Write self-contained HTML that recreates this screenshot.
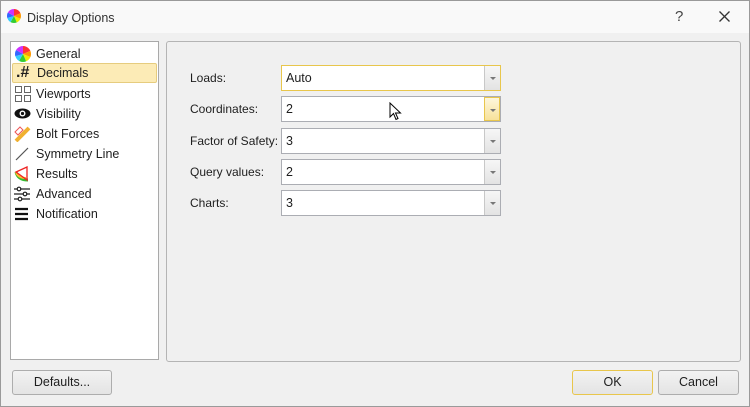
<!DOCTYPE html>
<html><head><meta charset="utf-8"><style>
*{box-sizing:border-box;margin:0;padding:0}
body{width:750px;height:407px;overflow:hidden;font-family:"Liberation Sans",sans-serif;font-size:12px;color:#1e1e1e;background:#f0f0f0}
.win{position:absolute;left:0;top:0;width:750px;height:407px;background:#f0f0f0}
.frame{position:absolute;left:0;top:0;width:750px;height:407px;border:1px solid #9a9a9a;pointer-events:none}
.title{position:absolute;left:0;top:0;width:750px;height:33px;background:#f9f9f9}
.title .t{position:absolute;left:27px;top:11px;font-size:12.5px;color:#333}
.abs{position:absolute}
.list{position:absolute;left:10px;top:41px;width:149px;height:319px;background:#fff;border:1px solid #a9a9a9}
.item{position:absolute;left:0;width:147px;height:20px}
.item span{position:absolute;left:25px;top:3px;font-size:12.5px}
.sel{background:#fcebb6;border:1px solid #e6cc7e;border-radius:2px;left:1px;width:145px}
.panel{position:absolute;left:166px;top:41px;width:575px;height:321px;border:1px solid #b4b4b4;border-radius:3px;background:#f0f0f0}
.lbl{position:absolute;left:190px;font-size:12px}
.cb{position:absolute;left:281px;width:220px;height:26px;background:#fff;border:1px solid #abadb3}
.cb span{position:absolute;left:4px;top:5px;font-size:12.5px}
.cb .dd{position:absolute;right:0;top:0;width:16px;height:24px;border-left:1px solid #c8c8c8;background:linear-gradient(#f6f6f6,#e3e3e3)}
.cb .dd:after{content:"";position:absolute;left:5px;top:11px;border-left:3px solid transparent;border-right:3px solid transparent;border-top:3px solid #777}
.btn{position:absolute;height:25px;border:1px solid #adadad;border-radius:3px;background:linear-gradient(#f2f2f2,#e4e4e4);text-align:center;line-height:23px;font-size:12.5px}
</style></head><body><div class="win">
<div class="title">
<svg class="abs" style="left:7px;top:9px" width="14" height="14" viewBox="0 0 14 14"><defs><clipPath id="c"><circle cx="7" cy="7" r="7"/></clipPath></defs><g clip-path="url(#c)"><path d="M7 7L7 0L14 0L14 4Z" fill="#f33"/><path d="M7 7L14 4L14 10Z" fill="#f90"/><path d="M7 7L14 10L10 14Z" fill="#ee0"/><path d="M7 7L10 14L3 14Z" fill="#3c3"/><path d="M7 7L3 14L0 9Z" fill="#3cf"/><path d="M7 7L0 9L0 3Z" fill="#36f"/><path d="M7 7L0 3L0 0L7 0Z" fill="#c3f"/></g></svg>
<div class="t">Display Options</div>
<div class="abs" style="left:675px;top:8px;font-size:15px;color:#444">?</div>
<svg class="abs" style="left:719px;top:11px" width="11" height="11"><path d="M0.5 0.5L10.5 10.5M10.5 0.5L0.5 10.5" stroke="#333" stroke-width="1.3"/></svg>
</div>
<div class="list">
<div class="item" style="top:2px"><svg class="abs" style="left:4px;top:2px" width="16" height="16" viewBox="0 0 14 14"><g clip-path="url(#c)"><path d="M7 7L7 0L14 0L14 4Z" fill="#f33"/><path d="M7 7L14 4L14 10Z" fill="#f90"/><path d="M7 7L14 10L10 14Z" fill="#ee0"/><path d="M7 7L10 14L3 14Z" fill="#3c3"/><path d="M7 7L3 14L0 9Z" fill="#3cf"/><path d="M7 7L0 9L0 3Z" fill="#36f"/><path d="M7 7L0 3L0 0L7 0Z" fill="#c3f"/></g></svg><span>General</span></div>
<div class="item sel" style="top:21px"><span style="left:3px;top:0;font-size:16px;font-weight:bold">.#</span><span style="left:24px;top:2px">Decimals</span></div>
<div class="item" style="top:42px"><svg class="abs" style="left:4px;top:2px" width="16" height="16"><g fill="none" stroke="#666"><rect x="0.5" y="0.5" width="6" height="6"/><rect x="9.5" y="0.5" width="6" height="6"/><rect x="0.5" y="9.5" width="6" height="6"/><rect x="9.5" y="9.5" width="6" height="6"/></g></svg><span>Viewports</span></div>
<div class="item" style="top:62px"><svg class="abs" style="left:3px;top:4px" width="17" height="11"><ellipse cx="8.5" cy="5.5" rx="8" ry="5" fill="#111"/><circle cx="8.5" cy="5.5" r="3" fill="#fff"/><circle cx="8.5" cy="5.5" r="1.6" fill="#111"/></svg><span>Visibility</span></div>
<div class="item" style="top:82px"><svg class="abs" style="left:3px;top:2px" width="17" height="16"><path d="M2 15L15 2" stroke="#f0b030" stroke-width="4"/><path d="M1 6L6 1L9 4L4 9Z" fill="none" stroke="#e55" stroke-width="1"/></svg><span>Bolt Forces</span></div>
<div class="item" style="top:102px"><svg class="abs" style="left:4px;top:3px" width="14" height="14"><path d="M1 13L13 1" stroke="#555" stroke-width="1.2"/></svg><span>Symmetry Line</span></div>
<div class="item" style="top:122px"><svg class="abs" style="left:3px;top:2px" width="17" height="16"><path d="M2 6Q4 14 14 14" stroke="#3b3" stroke-width="3" fill="none"/><path d="M2 6Q4 12 12 12" stroke="#fb3" stroke-width="2" fill="none"/><path d="M13 1L2 6L13 14Z" fill="none" stroke="#e22" stroke-width="1.3"/></svg><span>Results</span></div>
<div class="item" style="top:142px"><svg class="abs" style="left:3px;top:2px" width="16" height="16"><g stroke="#222" fill="#fff" stroke-width="1.2"><path d="M0 3H16M0 8H16M0 13H16"/><circle cx="5" cy="3" r="1.8"/><circle cx="11" cy="8" r="1.8"/><circle cx="6" cy="13" r="1.8"/></g></svg><span>Advanced</span></div>
<div class="item" style="top:162px"><svg class="abs" style="left:4px;top:3px" width="14" height="14"><path d="M0 2H13M0 7H13M0 12H13" stroke="#111" stroke-width="2.2"/></svg><span>Notification</span></div>
</div>
<div class="panel"></div>
<div class="lbl" style="top:71px">Loads:</div>
<div class="lbl" style="top:102px">Coordinates:</div>
<div class="lbl" style="top:134px">Factor of Safety:</div>
<div class="lbl" style="top:165px">Query values:</div>
<div class="lbl" style="top:196px">Charts:</div>
<div class="cb" style="top:65px;border-color:#e8c64c"><span>Auto</span><div class="dd"></div></div>
<div class="cb" style="top:96px"><span>2</span><div class="dd" style="border:1px solid #e8c64c;background:linear-gradient(#fdf6dc,#f7e29a)"></div></div>
<div class="cb" style="top:128px"><span>3</span><div class="dd"></div></div>
<div class="cb" style="top:159px"><span>2</span><div class="dd"></div></div>
<div class="cb" style="top:190px"><span>3</span><div class="dd"></div></div>
<svg class="abs" style="left:389px;top:102px" width="14" height="20"><path d="M1 1L1 15L4.5 11.5L7 17.5L9 16.5L6.5 11L11.5 11Z" fill="#fff" stroke="#000" stroke-width="1"/></svg>
<div class="btn" style="left:12px;top:370px;width:100px">Defaults...</div>
<div class="btn" style="left:572px;top:370px;width:81px;border-color:#e8c64c">OK</div>
<div class="btn" style="left:658px;top:370px;width:81px">Cancel</div>
<div class="frame"></div>
</div></body></html>
